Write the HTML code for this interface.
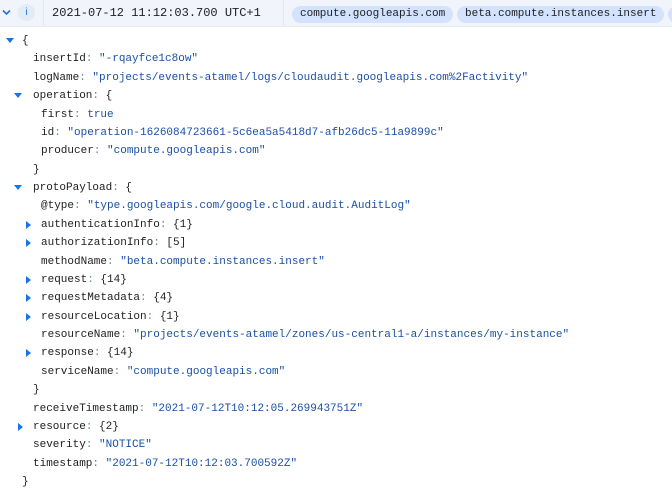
<!DOCTYPE html><html><head><style>
body{margin:0;width:672px;height:495px;background:#fff;overflow:hidden;font-family:"Liberation Mono",monospace;font-size:11px;color:#202124}
.hdr{position:absolute;left:0;top:0;width:672px;height:26px;background:#f1f4fa;border-bottom:1px solid #e8eaed}
.sep{position:absolute;top:0;height:26px;width:1px;background:#e3e7ee}
.chip{position:absolute;top:6px;height:17px;line-height:17px;border-radius:9px;background:#d3e3fd;color:#202124;padding:0 8px;font-size:11px}
.l{position:absolute;height:18px;line-height:18px;white-space:pre}
.k{color:#202124}.c{color:#5f8f8f}.v{color:#1a4fa8}
.a{position:absolute;width:0;height:0}
.dn{border-left:4px solid transparent;border-right:4px solid transparent;border-top:5px solid #1a73e8}
.rt{border-top:4px solid transparent;border-bottom:4px solid transparent;border-left:5px solid #1a73e8}
</style></head><body>
<div class="hdr"></div>
<div class="sep" style="left:43px"></div><div class="sep" style="left:283px"></div>
<svg style="position:absolute;left:2px;top:9px" width="9" height="7"><path d="M1 1.5L4.5 5L8 1.5" fill="none" stroke="#1a73e8" stroke-width="1.6"/></svg>
<div style="position:absolute;left:18px;top:4px;width:17px;height:17px;border-radius:50%;background:#e3ebf7;color:#1a73e8;font-family:'Liberation Sans',sans-serif;font-size:10px;text-align:center;line-height:17px">i</div>
<div class="l" style="left:52px;top:4px;color:#202124;font-size:12px">2021-07-12 11:12:03.700 UTC+1</div>
<div class="chip" style="left:292px">compute.googleapis.com</div>
<div class="chip" style="left:457px">beta.compute.instances.insert</div>
<div class="chip" style="left:668px;width:20px;padding:0"></div>
<div id="t"></div>
<script>
var L=[[0,22,1,null,'{'],[0,33,0,'insertId','"-rqayfce1c8ow"'],[0,33,0,'logName','"projects/events-atamel/logs/cloudaudit.googleapis.com%2Factivity"'],
[1,33,1,'operation','{'],[0,41,0,'first','true'],[0,41,0,'id','"operation-1626084723661-5c6ea5a5418d7-afb26dc5-11a9899c"'],[0,41,0,'producer','"compute.googleapis.com"'],[0,33,1,null,'}'],
[1,33,1,'protoPayload','{'],[0,41,0,'@type','"type.googleapis.com/google.cloud.audit.AuditLog"'],[2,41,1,'authenticationInfo','{1}'],[2,41,1,'authorizationInfo','[5]'],
[0,41,0,'methodName','"beta.compute.instances.insert"'],[2,41,1,'request','{14}'],[2,41,1,'requestMetadata','{4}'],[2,41,1,'resourceLocation','{1}'],
[0,41,0,'resourceName','"projects/events-atamel/zones/us-central1-a/instances/my-instance"'],[2,41,1,'response','{14}'],[0,41,0,'serviceName','"compute.googleapis.com"'],
[0,33,1,null,'}'],[0,33,0,'receiveTimestamp','"2021-07-12T10:12:05.269943751Z"'],[2,33,1,'resource','{2}'],[0,33,0,'severity','"NOTICE"'],[0,33,0,'timestamp','"2021-07-12T10:12:03.700592Z"'],[0,22,1,null,'}']];
var h='';L.forEach(function(r,i){var top=32+i*18.375;
if(i==0)h+='<div class="a dn" style="left:6px;top:'+(top+6)+'px"></div>';
if(r[0]==1)h+='<div class="a dn" style="left:14px;top:'+(top+6)+'px"></div>';
if(r[0]==2)h+='<div class="a rt" style="left:'+(r[1]-15)+'px;top:'+(top+5)+'px"></div>';
var s=r[3]?'<span class="k">'+r[3]+'</span><span class="c">: </span>':'';
var vc=(r[2]?'k':'v');s+='<span class="'+vc+'">'+r[4]+'</span>';
h+='<div class="l" style="left:'+r[1]+'px;top:'+top+'px">'+s+'</div>';});
document.getElementById('t').innerHTML=h;
</script>
</body></html>
